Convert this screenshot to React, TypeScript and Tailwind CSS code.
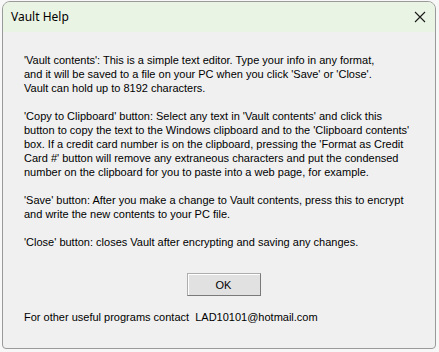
import React from 'react';

const paragraphs: string[][] = [
  [
    "'Vault contents': This is a simple text editor. Type your info in any format,",
    "and it will be saved to a file on your PC when you click 'Save' or 'Close'.",
    'Vault can hold up to 8192 characters.',
  ],
  [
    "'Copy to Clipboard' button: Select any text in 'Vault contents' and click this",
    "button to copy the text to the Windows clipboard and to the 'Clipboard contents'",
    "box. If a credit card number is on the clipboard, pressing the 'Format as Credit",
    "Card #' button will remove any extraneous characters and put the condensed",
    'number on the clipboard for you to paste into a web page, for example.',
  ],
  [
    "'Save' button: After you make a change to Vault contents, press this to encrypt",
    'and write the new contents to your PC file.',
  ],
  ["'Close' button: closes Vault after encrypting and saving any changes."],
];

export default function App() {
  return (
    <div className="w-[439px] h-[352px] bg-[#f7f7f7] pt-[1px] pl-[2px] pr-[3px] pb-[3px]">
      <div className="h-full flex flex-col rounded-t-[8px] rounded-b-[4px] border border-[#9a9a9a] bg-[#f0f0f0] overflow-hidden">
        {/* title bar */}
        <div className="h-[30px] shrink-0 flex items-center justify-between bg-[#eaf4e4] pl-[8px] pr-[8px]">
          <span className="text-[12px] text-black font-['Noto_Sans',sans-serif]">Vault Help</span>
          <svg width="12" height="12" viewBox="0 0 12 12" className="mr-[1px]">
            <path d="M1 1 L11 11 M11 1 L1 11" stroke="#1a1a1a" strokeWidth="1.1" fill="none" />
          </svg>
        </div>

        <div className="flex-1 flex flex-col pl-[21px] pt-[21px] text-[11px] leading-[14px] text-black font-['Liberation_Sans',sans-serif]">
          <div className="flex flex-col gap-[14px]">
            {paragraphs.map((lines, i) => (
              <div key={i}>
                {lines.map((l) => (
                  <div key={l} className="whitespace-pre">{l}</div>
                ))}
              </div>
            ))}
          </div>

          <div className="flex justify-center pr-[12px] mt-[24px]">
            <button className="w-[74px] h-[23px] bg-[#e1e1e1] border border-[#adadad] border-r-[#7a7a7a] border-b-[#7a7a7a] shadow-[inset_1px_1px_0_#fff] text-[11px]">
              OK
            </button>
          </div>

          <div className="mt-[14px] whitespace-pre">For other useful programs contact  LAD10101@hotmail.com</div>
        </div>
      </div>
    </div>
  );
}
